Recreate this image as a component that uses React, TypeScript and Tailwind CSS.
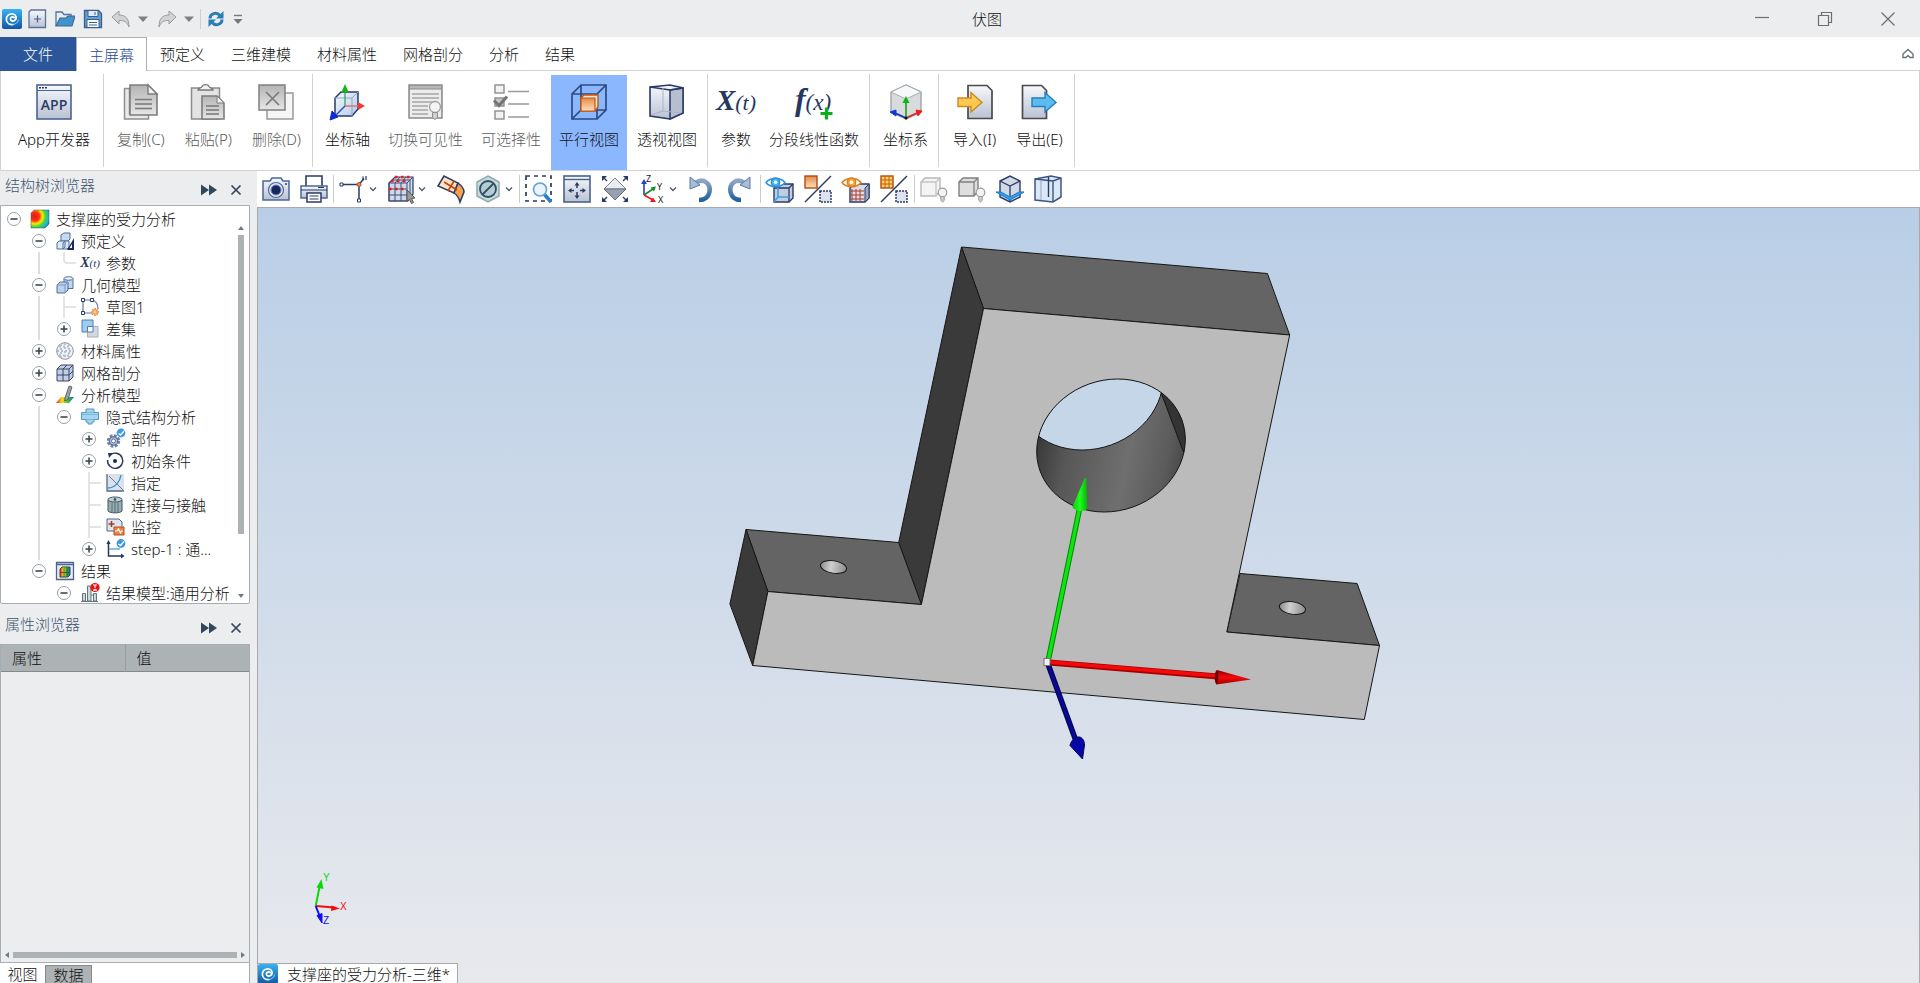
import React from "react";

const NAVY = "#2b3a67";

type SvgProps = { children: React.ReactNode; box?: number; className?: string };

function Icon({ children, box = 28, className = "size-7" }: SvgProps) {
  return (
    <svg viewBox={`0 0 ${box} ${box}`} className={`shrink-0 ${className}`} fill="none" aria-hidden="true">
      {children}
    </svg>
  );
}

function Gradients() {
  return (
    <svg className="absolute size-0" aria-hidden="true">
      <defs>
        <linearGradient id="steel" x1="0" y1="0" x2="0" y2="1">
          <stop offset="0" stopColor="#f6f8fc" />
          <stop offset="1" stopColor="#b9c1d3" />
        </linearGradient>
        <linearGradient id="blueface" x1="0" y1="0" x2="1" y2="1">
          <stop offset="0" stopColor="#f3f8fd" />
          <stop offset="1" stopColor="#b3cbea" />
        </linearGradient>
        <linearGradient id="grey" x1="0" y1="0" x2="0" y2="1">
          <stop offset="0" stopColor="#b4b4b4" />
          <stop offset="1" stopColor="#e6e6e6" />
        </linearGradient>
        <linearGradient id="orange" x1="0" y1="0" x2="0" y2="1">
          <stop offset="0" stopColor="#e58a4a" />
          <stop offset="1" stopColor="#ffe0bd" />
        </linearGradient>
        <linearGradient id="logo" x1="0" y1="0" x2="0" y2="1">
          <stop offset="0" stopColor="#38b2f3" />
          <stop offset="1" stopColor="#1157a6" />
        </linearGradient>
        <linearGradient id="swirl" x1="0" y1="0" x2="0" y2="1">
          <stop offset="0" stopColor="#8fa6c6" />
          <stop offset="1" stopColor="#22619f" />
        </linearGradient>
        <radialGradient id="heat" cx="0.22" cy="0.35" r="1">
          <stop offset="0" stopColor="#f01414" />
          <stop offset="0.25" stopColor="#f5371b" />
          <stop offset="0.42" stopColor="#ffe600" />
          <stop offset="0.6" stopColor="#3fd33f" />
          <stop offset="0.76" stopColor="#16b7e8" />
          <stop offset="0.95" stopColor="#1b3fd8" />
        </radialGradient>
        <linearGradient id="rainbow" x1="0" y1="0" x2="1" y2="0">
          <stop offset="0" stopColor="#ef2020" />
          <stop offset="0.35" stopColor="#f7e016" />
          <stop offset="0.7" stopColor="#27c23a" />
          <stop offset="1" stopColor="#2457e6" />
        </linearGradient>
      </defs>
    </svg>
  );
}

function Logo() {
  return (
    <Icon box={20} className="size-5">
      <rect width="20" height="20" rx="2" fill="url(#logo)" />
      <path
        d="M12.300 8.700C11 7.300 8.300 8 8.400 10c.1 1.900 2.400 2.600 4.200 1.500 2.600-1.600 1.900-5.700-1.500-6.500C7.200 4.200 3.900 7 4.400 10.900c.4 3 3.200 4.900 6.600 4.600"
        stroke="#fff"
        strokeWidth="1.700"
        strokeLinecap="round"
      />
      <path d="M11 15.500c3-.2 5-2 5.500-4.500" stroke="#9fd0f5" strokeWidth="1" strokeLinecap="round" />
    </Icon>
  );
}

/* ---------- ribbon icons (36 x 36) ---------- */

const ribbonIcons: Record<string, React.ReactNode> = {
  app: (
    <>
      <rect x="1" y="1" width="34" height="34" fill="url(#steel)" stroke="#4b6591" strokeWidth="1.600" />
      <path d="M1 6.500h34" stroke="#4b6591" />
      <path d="M3 3.700h8" stroke={NAVY} strokeWidth="1.600" strokeDasharray="2 1" />
      <text x="18" y="26" textAnchor="middle" fontSize="14" fontWeight="600" fontFamily="Open Sans" fill={NAVY}>
        APP
      </text>
    </>
  ),
  copy: (
    <>
      <path d="M1.500 4.500h5v25h19v5.500h-24z" fill="#e9e9e9" stroke="#8f8f8f" strokeWidth="1.500" />
      <path d="M7 1h18l9 9v21H7z" fill="url(#grey)" stroke="#7c7c7c" strokeWidth="1.600" />
      <path d="M25 1v9h9z" fill="#f0f0f0" stroke="#7c7c7c" strokeWidth="1.400" />
      <path d="M12 15.500h17M12 20h17M12 24.500h17" stroke="#777" strokeWidth="1.600" />
    </>
  ),
  paste: (
    <>
      <path d="M1.500 4h28v31h-28z" fill="#e3e3e3" stroke="#8c8c8c" strokeWidth="1.500" />
      <path d="M8 6c0-2 3-1.500 4-3.500C13 0 18 0 19 2.500 20 4.500 23 4 23 6z" fill="#f2f2f2" stroke="#777" strokeWidth="1.400" />
      <path d="M12 12h15l7 7v16H12z" fill="url(#grey)" stroke="#7c7c7c" strokeWidth="1.600" />
      <path d="M27 12v7h7z" fill="#f0f0f0" stroke="#7c7c7c" />
      <path d="M16 22h13M16 26h13M16 30h13" stroke="#777" strokeWidth="1.500" />
    </>
  ),
  remove: (
    <>
      <rect x="9" y="9" width="26" height="26" fill="#f6f6f6" stroke="#9a9a9a" strokeWidth="1.500" />
      <rect x="1" y="1" width="26" height="25" fill="url(#grey)" stroke="#858585" strokeWidth="1.600" />
      <path d="M8 8l13 13M21 8L8 21" stroke="#7a7a7a" strokeWidth="1.700" />
    </>
  ),
  axis: (
    <>
      <path d="M6 14l6-6h17v17l-6 7H6z" fill="url(#blueface)" stroke={NAVY} strokeWidth="1.500" />
      <path d="M6 14h17v18M23 14l6-6" stroke="#8fa6ca" strokeWidth="1" />
      <path d="M16 22V7" stroke="#2fa856" strokeWidth="1.300" />
      <path d="M12.500 8L16 0l3.500 8z" fill="#12b516" />
      <path d="M16 22h13" stroke="#e06f78" strokeWidth="1.500" />
      <path d="M29 18l7 4-7 4z" fill="#f03a3a" />
      <path d="M16 22L5 33" stroke="#2b50c8" strokeWidth="1.500" />
      <path d="M1 36l2-9 6 6z" fill="#0b2bd6" stroke="#0b2bd6" />
    </>
  ),
  visibility: (
    <>
      <rect x="1" y="1" width="33" height="33" fill="url(#grey)" stroke="#8b8b8b" strokeWidth="1.500" />
      <rect x="2" y="5" width="31" height="28" fill="#ececec" />
      <path d="M1 5h33" stroke="#8b8b8b" />
      <path d="M4 10h27M4 14h27M4 18h24M4 22h16M4 26h16M4 30h16" stroke="#a5a5a5" strokeWidth="1.500" />
      <circle cx="27" cy="23" r="5.500" fill="#f4f4f4" stroke="#a2a2a2" strokeWidth="1.300" />
      <path d="M24.500 28.500h5v5l-2.500 2-2.500-2z" fill="#cfcfcf" stroke="#8e8e8e" />
    </>
  ),
  selectable: (
    <>
      <rect x="2" y="1" width="9" height="8" fill="#f2f2f2" stroke="#8d8d8d" strokeWidth="1.400" />
      <rect x="2" y="14" width="9" height="8" fill="#c7c7c7" stroke="#8d8d8d" strokeWidth="1.400" />
      <rect x="2" y="27" width="9" height="8" fill="#f2f2f2" stroke="#8d8d8d" strokeWidth="1.400" />
      <path d="M1 16.500l5 5 8-9" stroke="#757575" strokeWidth="3" />
      <path d="M15 7.500h21M15 20h21M15 33h21" stroke="#9b9b9b" strokeWidth="1.700" />
    </>
  ),
  parallel: (
    <>
      <path d="M1 10h25v25H1zM10 1h25v25H10zM1 10l9-9M26 10l9-9M1 35l9-9M26 35l9-9" stroke="#2c4a80" strokeWidth="1.700" />
      <path d="M10 14l3-3h14v12l-3 4H10z" fill="#ffe8d2" stroke="#c75312" strokeWidth="1.400" />
      <path d="M10 14h14v13H10z" fill="url(#orange)" stroke="#c75312" strokeWidth="1.200" />
    </>
  ),
  perspective: (
    <>
      <path d="M1 3l20-2 13 3v25l-13 6-20-3z" fill="url(#steel)" stroke={NAVY} strokeWidth="1.600" />
      <path d="M21 6v29l13-6V4z" fill="#b6bfd0" stroke={NAVY} strokeWidth="1.500" />
      <path d="M1 3l20 3 13-2" stroke={NAVY} strokeWidth="1.500" />
      <path d="M14 4v23L2 31M14 27l18 2" stroke="#a9b5cb" strokeWidth="1" />
    </>
  ),
  params: (
    <text x="18" y="26" textAnchor="middle" fontFamily="Liberation Serif" fontStyle="italic" fontWeight="700" fill="#26365f">
      <tspan fontSize="29">X</tspan>
      <tspan fontSize="22" fontWeight="400">(t)</tspan>
    </text>
  ),
  fx: (
    <>
      <text x="17" y="26" textAnchor="middle" fontFamily="Liberation Serif" fontStyle="italic" fontWeight="700" fill="#26365f">
        <tspan fontSize="32">f</tspan>
        <tspan fontSize="23" fontWeight="400">(x)</tspan>
      </text>
      <path d="M30.500 23.500v12M24.500 29.500h12" stroke="#0eb01a" strokeWidth="3.200" />
    </>
  ),
  csys: (
    <>
      <path d="M3 8l15-7 15 7v20l-15 7-15-7z" fill="#d8dadb" stroke="#9aa0a5" strokeWidth="1.300" />
      <path d="M3 8l15-7 15 7-15 7z" fill="#f7f8f9" stroke="#a9afb5" />
      <path d="M18 34V17" stroke="#11a514" strokeWidth="1.600" />
      <path d="M14.500 19L18 12l3.500 7z" fill="#10b513" />
      <path d="M18 34L7 29" stroke="#1634c4" strokeWidth="1.500" />
      <path d="M2 28l6-2v6z" fill="#1634d8" stroke="#1634d8" />
      <path d="M18 34l11-5" stroke="#e02020" strokeWidth="1.500" />
      <path d="M34 27l-6-1 2 6z" fill="#ea1f1f" stroke="#ea1f1f" />
      <circle cx="18" cy="34" r="1.500" fill="#111" />
    </>
  ),
  import: (
    <>
      <path d="M11 1.500h19l5 5v28H11z" fill="url(#steel)" stroke="#4a4a4a" strokeWidth="1.700" />
      <path d="M1 14h13V8.500L25 18.500 14 28v-5.500H1z" fill="#ffc84f" stroke="#c98a25" strokeWidth="1.400" />
    </>
  ),
  export: (
    <>
      <path d="M1.500 1.500h19l5 5v28h-24z" fill="url(#steel)" stroke="#4a4a4a" strokeWidth="1.700" />
      <path d="M11 14h13V8.500L35 18.500 24 28v-5.500H11z" fill="#5abcf0" stroke="#257fb8" strokeWidth="1.400" />
    </>
  ),
};

type RibbonItem = { icon: string; label: string; disabled?: boolean; active?: boolean };

const ribbonGroups: { pad: string; itemPad: string; items: RibbonItem[] }[] = [
  { pad: "pl-[9px] pr-[5px]", itemPad: "px-2", items: [{ icon: "app", label: "App开发器" }] },
  {
    pad: "pl-1 pr-[2px]",
    itemPad: "px-[9px]",
    items: [
      { icon: "copy", label: "复制(C)", disabled: true },
      { icon: "paste", label: "粘贴(P)", disabled: true },
      { icon: "remove", label: "删除(D)", disabled: true },
    ],
  },
  {
    pad: "pl-1 pr-[2px]",
    itemPad: "px-2",
    items: [
      { icon: "axis", label: "坐标轴" },
      { icon: "visibility", label: "切换可见性", disabled: true },
      { icon: "selectable", label: "可选择性", disabled: true },
      { icon: "parallel", label: "平行视图", active: true },
      { icon: "perspective", label: "透视视图" },
    ],
  },
  {
    pad: "pl-[5px] pr-[2px]",
    itemPad: "px-2",
    items: [
      { icon: "params", label: "参数" },
      { icon: "fx", label: "分段线性函数" },
    ],
  },
  { pad: "pl-[5px] pr-[2px]", itemPad: "px-2", items: [{ icon: "csys", label: "坐标系" }] },
  {
    pad: "pl-[5px] pr-[2px]",
    itemPad: "px-[9px]",
    items: [
      { icon: "import", label: "导入(I)" },
      { icon: "export", label: "导出(E)" },
    ],
  },
];

function Ribbon() {
  return (
    <div className="flex h-[100px] shrink-0 items-stretch border border-t-0 border-[#d2d2d2]">
      {ribbonGroups.map((group, gi) => (
        <div key={gi} className="flex">
          <div className={`flex gap-[2px] ${group.pad}`}>
            {group.items.map((item) => (
              <button
                key={item.icon}
                aria-pressed={item.active}
                className={`mt-1 flex flex-col items-center pt-[9px] ${group.itemPad} ${
                  item.active ? "bg-[#8bb7ff]" : ""
                } ${item.disabled ? "text-[#5c5c5c]" : ""}`}
              >
                <Icon box={36} className="-mx-1 size-9 overflow-visible">
                  {ribbonIcons[item.icon]}
                </Icon>
                <span className="mt-[9px] whitespace-nowrap leading-5">{item.label}</span>
              </button>
            ))}
          </div>
          <div className="my-[3px] w-px bg-[#d2d2d2]" />
        </div>
      ))}
    </div>
  );
}

/* ---------- view toolbar icons (28 x 28) ---------- */

const Bulb = () => (
  <>
    <circle cx="22.500" cy="17.500" r="4.300" fill="#f3f3f3" stroke="#9d9d9d" strokeWidth="1.200" />
    <path d="M20.800 21.500h3.400v4l-1.700 1.500-1.700-1.500z" fill="#cfcfcf" stroke="#9d9d9d" />
  </>
);

const Eye = ({ color, light }: { color: string; light: string }) => (
  <>
    <path d="M0 7.500C4 2 15 2 19 7.500 15 13 4 13 0 7.500z" fill="#fff" stroke={color} strokeWidth="1.500" />
    <circle cx="9.500" cy="7.200" r="4.200" fill={light} stroke={color} strokeWidth="1.400" />
    <circle cx="9.500" cy="7.200" r="1.800" fill="#fff" />
  </>
);

const toolIcons: Record<string, React.ReactNode> = {
  camera: (
    <>
      <path d="M1 6h7l2-3h9l2 3h6v19H1z" fill="url(#steel)" stroke="#4a6797" strokeWidth="1.500" />
      <circle cx="14" cy="15" r="7.500" fill="#dfe6f1" stroke="#4a6797" strokeWidth="1.200" />
      <circle cx="14" cy="15" r="5" fill="#16295c" stroke="#6f87b2" />
      <circle cx="24" cy="9" r="1" fill={NAVY} />
    </>
  ),
  printer: (
    <>
      <path d="M6 12V1h16v11" fill="#fff" stroke={NAVY} strokeWidth="1.600" />
      <path d="M1 11h26v12H1z" fill="url(#steel)" stroke="#4a6797" strokeWidth="1.500" />
      <path d="M1 15h26M18 12.500h6" stroke={NAVY} strokeWidth="1.200" />
      <path d="M7 18h14v9H7z" fill="#fff" stroke={NAVY} strokeWidth="1.500" />
      <path d="M9.500 21h9M9.500 24h9" stroke={NAVY} strokeWidth="1.200" />
    </>
  ),
  vertex: (
    <>
      <path d="M2 9.500h18M20 9.500V26M20 9.500l5-6" stroke={NAVY} strokeWidth="1.500" />
      <path d="M24 1.500v4M27 1v4" stroke={NAVY} strokeWidth="1.200" />
      <path d="M1 8h3v3H1zM18.500 24h3v3h-3z" fill="#fff" stroke={NAVY} />
      <circle cx="20" cy="9.500" r="2" fill="#f08a50" stroke="#b5470f" />
    </>
  ),
  mesh: (
    <>
      <path d="M1 8l6-6h18v17l-5 7H1z" fill="#cfd9e8" stroke={NAVY} strokeWidth="1.200" />
      <path d="M1 8h18v18H1zM7 8v18M13 8v18M1 14h18M1 20h18M7 8l5-6M13 8l5-6M19 8l6-6M4 5h18v16" stroke="#40517c" />
      <path d="M1 14h18M3 6h18M7 2h18" stroke="#f01818" strokeWidth="2.500" strokeDasharray="2.500 3.500" />
      <path d="M19 15l8 8-3.500.5 2 4-2 1-2-4-2.500 2z" fill="#9a9a9a" stroke="#555" />
    </>
  ),
  plane: (
    <>
      <path d="M1 11L7 1l14 7-4 10z" fill="#ffe2c2" stroke={NAVY} strokeWidth="1.500" />
      <path d="M21 8c4 3 6 6 6 9l-4 10c-1-4-3-7-6-9z" fill="#f5a14f" stroke={NAVY} strokeWidth="1.500" />
      <path d="M7 7l13 8M17 6l-6 10" stroke="#c2400c" strokeWidth="1.500" />
    </>
  ),
  hex: (
    <>
      <path d="M13 1l11 6v14l-11 6-11-6V7z" fill="#c8dcde" stroke="#8fa9ad" strokeWidth="1.500" />
      <circle cx="13" cy="14" r="8" fill="#b6ccd0" stroke="#2f4f68" strokeWidth="1.800" />
      <path d="M7.500 19.500l11-11" stroke="#2f4f68" strokeWidth="1.800" />
    </>
  ),
  zoom: (
    <>
      <rect x="1" y="1" width="25" height="25" stroke={NAVY} strokeWidth="1.700" strokeDasharray="4 4" />
      <path d="M19 19l7 8" stroke="#2580c4" strokeWidth="3.500" />
      <circle cx="15" cy="14.500" r="6.500" fill="#e8f3fb" stroke="#63a3cf" strokeWidth="1.600" />
    </>
  ),
  fit: (
    <>
      <rect x="1" y="1" width="26" height="26" fill="url(#steel)" stroke="#49628e" strokeWidth="1.600" />
      <path d="M1 4.500h26" stroke="#49628e" strokeWidth="1.400" />
      <path d="M14 10v3M14 17v4M8 15.500h3M17 15.500h3" stroke={NAVY} strokeWidth="1.500" />
      <path d="M11.500 10.500L14 7l2.500 3.500zM11.500 20.500L14 24l2.500-3.500zM8.500 13L5 15.500 8.500 18zM19.500 13l3.500 2.500-3.500 2.500z" fill={NAVY} />
    </>
  ),
  diamond: (
    <>
      <path d="M3 14L14 3l11 11z" fill="#e9ecef" stroke="#7d8691" />
      <path d="M3 14l11 11 11-11z" fill="#98a2af" stroke="#667080" />
      <path d="M2 2l4 4M26 2l-4 4M2 26l4-4M26 26l-4-4" stroke={NAVY} strokeWidth="1.400" />
      <path d="M1 6V1h5zM27 6V1h-5zM1 22v5h5zM27 22v5h-5z" fill={NAVY} />
    </>
  ),
  axes: (
    <>
      <path d="M5 20V8" stroke="#2444c8" strokeWidth="1.600" />
      <path d="M2 9l3-5 3 5z" fill="#2444c8" />
      <path d="M5 20l9-6" stroke="#138a2c" strokeWidth="1.600" />
      <path d="M17 11.500l-2 5-3.500-4z" fill="#138a2c" />
      <path d="M5 20l9 5" stroke="#e81a1a" strokeWidth="1.600" />
      <path d="M17 27h-6l3-4.500z" fill="#e81a1a" />
      <g fontSize="9" fontFamily="Noto Sans" fontWeight="400" fill="#222">
        <text x="7" y="7">Z</text>
        <text x="18" y="15">Y</text>
        <text x="19" y="28">X</text>
      </g>
    </>
  ),
  undo: (
    <>
      <path d="M7 8C16 2 23 9 21.500 17c-1 5-5 8-10.500 8" stroke="url(#swirl)" strokeWidth="4.500" />
      <path d="M2 2v12l10-4z" fill="#a9bbd6" stroke="#5a7aa8" />
    </>
  ),
  redo: (
    <>
      <path d="M19 8C10 2 3 9 4.500 17c1 5 5 8 10.500 8" stroke="url(#swirl)" strokeWidth="4.500" />
      <path d="M24 2v12l-10-4z" fill="#a9bbd6" stroke="#5a7aa8" />
    </>
  ),
  eyecube: (
    <>
      <path d="M8 13l4-4h15v14l-4 4H8z" fill="#c2cedf" stroke={NAVY} strokeWidth="1.400" />
      <path d="M8 13h15v14M23 13l4-4" stroke={NAVY} strokeWidth="1.300" />
      <path d="M12 13v9h11M12 22l-4 5" stroke="#3ba0e6" strokeWidth="1.600" />
      <Eye color="#2b93d8" light="#49b4f2" />
    </>
  ),
  swapface: (
    <>
      <rect x="1" y="1" width="12" height="12" fill="url(#orange)" stroke="#b04c14" strokeWidth="1.400" />
      <path d="M27 1L1 27" stroke={NAVY} strokeWidth="1.500" />
      <rect x="16" y="16" width="11" height="11" fill="#dde2ec" stroke={NAVY} strokeWidth="1.500" strokeDasharray="2 1" />
    </>
  ),
  eyemesh: (
    <>
      <path d="M8 13l4-4h15v14l-4 4H8z" fill="#d9dde6" stroke={NAVY} strokeWidth="1.400" />
      <path d="M23 13v14l4-4V9z" fill="#9fa9bd" stroke={NAVY} />
      <path d="M10 14v12M14 14v12M18 14v12M9 16h13M9 20h13M9 24h13" stroke="#b23a2a" />
      <Eye color="#d9801f" light="#f5a83e" />
    </>
  ),
  swapmesh: (
    <>
      <rect x="1" y="1" width="12" height="12" fill="#ffd25c" stroke="#b04c14" strokeWidth="1.400" />
      <path d="M5 1v12M9 1v12M1 5h12M1 9h12" stroke="#c25a1a" />
      <path d="M27 1L1 27" stroke={NAVY} strokeWidth="1.500" />
      <rect x="16" y="16" width="11" height="11" fill="#dde2ec" stroke={NAVY} strokeWidth="1.500" strokeDasharray="2 1" />
    </>
  ),
  bulblight: (
    <>
      <path d="M1 7l4-4h15v13l-4 5H1z" fill="#f4f4f4" stroke="#b9b9b9" strokeWidth="1.400" />
      <path d="M1 7h15v14M16 7l4-4" stroke="#c4c4c4" strokeWidth="1.300" />
      <Bulb />
    </>
  ),
  bulbdark: (
    <>
      <path d="M1 7l4-4h15v13l-4 5H1z" fill="#dedede" stroke="#808080" strokeWidth="1.400" />
      <path d="M1 7h15v14M16 7l4-4" stroke="#808080" strokeWidth="1.300" />
      <Bulb />
    </>
  ),
  section: (
    <>
      <path d="M4 6l10-5 10 5v16l-10 5-10-5z" fill="#d3d9e4" stroke={NAVY} strokeWidth="1.400" />
      <path d="M4 6l10 5 10-5M14 11v16" stroke={NAVY} strokeWidth="1.300" />
      <path d="M0 17h5l9 5 9-5h5l-14 8z" fill="#2fa4f5" stroke="#1977c9" />
    </>
  ),
  glassbox: (
    <>
      <path d="M1 4l16-3 10 2v19l-8 5-18-2z" fill="#dbe7f4" stroke="#3c5583" strokeWidth="1.500" />
      <path d="M1 4l18 2v21M19 6l8-3" stroke="#3c5583" strokeWidth="1.400" />
      <path d="M7 5v20" stroke="#93a8c8" />
      <path d="M14.500 2v20" stroke={NAVY} strokeWidth="1.400" />
    </>
  ),
};

const toolGroups: { icon: string; label: string; split?: boolean }[][] = [
  [
    { icon: "camera", label: "截图" },
    { icon: "printer", label: "打印" },
  ],
  [
    { icon: "vertex", label: "选择点", split: true },
    { icon: "mesh", label: "选择网格", split: true },
    { icon: "plane", label: "平面" },
    { icon: "hex", label: "过滤", split: true },
  ],
  [
    { icon: "zoom", label: "框选缩放" },
    { icon: "fit", label: "适应窗口" },
    { icon: "diamond", label: "居中" },
    { icon: "axes", label: "视角", split: true },
    { icon: "undo", label: "撤销视图" },
    { icon: "redo", label: "恢复视图" },
  ],
  [
    { icon: "eyecube", label: "显示几何" },
    { icon: "swapface", label: "切换几何" },
    { icon: "eyemesh", label: "显示网格" },
    { icon: "swapmesh", label: "切换网格" },
  ],
  [
    { icon: "bulblight", label: "隐藏" },
    { icon: "bulbdark", label: "显示" },
    { icon: "section", label: "剖切" },
    { icon: "glassbox", label: "透明" },
  ],
];

function ViewToolbar() {
  return (
    <div className="flex h-[36px] shrink-0 items-stretch bg-white py-1">
      {toolGroups.map((group, gi) => (
        <div
          key={gi}
          className={`flex items-center ${gi < toolGroups.length - 1 ? "border-r border-[#cccccc]" : ""} ${
            gi > 1 ? "pr-px" : ""
          }`}
        >
          {group.map((t) => (
            <button
              key={t.icon}
              aria-label={t.label}
              className={`flex items-center pl-[5px] ${t.split ? "w-[49px] gap-[2px]" : "w-[38px]"}`}
            >
              <Icon className="size-7 overflow-visible">{toolIcons[t.icon]}</Icon>
              {t.split && (
                <Icon box={8} className="size-2">
                  <path d="M1 2.500l3 3 3-3" stroke="#4d6070" strokeWidth="1.400" />
                </Icon>
              )}
            </button>
          ))}
        </div>
      ))}
    </div>
  );
}

/* ---------- title bar and tabs ---------- */

function TitleBar() {
  const caret = (
    <Icon box={10} className="size-[10px]">
      <path d="M0 2.500h10L5 8z" fill="#808080" />
    </Icon>
  );
  return (
    <header className="grid h-[37px] shrink-0 grid-cols-[1fr_auto_1fr] items-center bg-[#ecedef]">
      <div className="flex items-center pl-[2px]">
        <Logo />
        <button aria-label="新建" className="ml-[6px]">
          <Icon box={20} className="size-5">
            <path d="M1 3l2-2h14.500v17.500H1z" fill="url(#steel)" stroke="#5c7299" strokeWidth="1.300" />
            <path d="M9.500 6.500v7M6 10h7" stroke="#4a5d84" strokeWidth="1.200" />
          </Icon>
        </button>
        <button aria-label="打开" className="ml-[7px]">
          <Icon box={20} className="size-5">
            <path d="M1 17V3h6l2 2.500h7V9" fill="#e6ecf5" stroke="#54719f" strokeWidth="1.300" />
            <path d="M1 17L5 9h6l2-2h7l-3 10z" fill="#3f94cc" stroke="#45648f" strokeWidth="1.100" />
          </Icon>
        </button>
        <button aria-label="保存" className="ml-[8px]">
          <Icon box={20} className="size-5">
            <path d="M1.500 1.500h14l3 3v14h-17z" fill="#5da2d4" stroke="#3c5e8d" strokeWidth="1.300" />
            <path d="M5 1.500h10v6H5z" fill="#e4ebf4" stroke="#3c5e8d" />
            <path d="M4 10.500h12v8H4z" fill="#fff" stroke="#3c5e8d" />
            <path d="M6 13.500h8M6 16h8M12 3v3" stroke="#3c5e8d" />
          </Icon>
        </button>
        <button aria-label="撤销" className="ml-[8px] flex items-center gap-[7px]">
          <Icon box={20} className="size-5">
            <path d="M1 8l7-6v4c7 0 10 4 10 12-2-5-4-6.500-10-6.500V15z" fill="#d3d3d3" stroke="#9b9b9b" />
          </Icon>
          {caret}
        </button>
        <button aria-label="重做" className="ml-[9px] flex items-center gap-[7px]">
          <Icon box={20} className="size-5">
            <path d="M19 8l-7-6v4C5 6 2 10 2 18c2-5 4-6.500 10-6.500V15z" fill="#d3d3d3" stroke="#9b9b9b" />
          </Icon>
          {caret}
        </button>
        <div className="ml-[6px] h-5 w-px bg-[#cfcfcf]" />
        <button aria-label="刷新" className="ml-[5px]">
          <Icon box={20} className="size-5">
            <path d="M4 9.500C4 4.500 10.500 2.500 14 6.500" stroke="#2a7db5" strokeWidth="3" />
            <path d="M17.500 2v7.500H10z" fill="#2a7db5" />
            <path d="M16 10.500c0 5-6.500 7-10 3" stroke="#2a7db5" strokeWidth="3" />
            <path d="M2.500 18v-7.500H10z" fill="#2a7db5" />
          </Icon>
        </button>
        <button aria-label="自定义快速访问工具栏" className="ml-[7px]">
          <Icon box={10} className="size-[10px]">
            <path d="M1 1.500h8" stroke="#777" strokeWidth="1.400" />
            <path d="M.500 5h9L5 10z" fill="#777" />
          </Icon>
        </button>
      </div>
      <h1 className="pl-[54px] leading-5">伏图</h1>
      <div className="flex items-center justify-end gap-[47px] pr-6">
        <button aria-label="最小化">
          <Icon box={16} className="size-4">
            <path d="M1 6.500h14" stroke="#6e6e6e" strokeWidth="1.200" />
          </Icon>
        </button>
        <button aria-label="还原">
          <Icon box={16} className="size-4">
            <path d="M1.500 4.500h10v10h-10zM4.500 4.500v-3h10v10h-3" stroke="#6e6e6e" strokeWidth="1.200" />
          </Icon>
        </button>
        <button aria-label="关闭">
          <Icon box={16} className="size-4">
            <path d="M1.500 1.500l13 13M14.500 1.500l-13 13" stroke="#6e6e6e" strokeWidth="1.200" />
          </Icon>
        </button>
      </div>
    </header>
  );
}

const menuTabs = ["预定义", "三维建模", "材料属性", "网格剖分", "分析", "结果"];

function MenuTabs() {
  return (
    <nav className="flex h-[34px] shrink-0 items-stretch bg-white leading-8">
      <button className="w-[76px] bg-[#2b579a] text-white">文件</button>
      <button className="border border-b-0 border-[#b0b0b0] px-[12px] text-[#1f4a8f]">主屏幕</button>
      <div className="flex grow border-b border-[#d2d2d2]">
        {menuTabs.map((t) => (
          <button key={t} className="px-[13px]">
            {t}
          </button>
        ))}
        <button aria-label="折叠功能区" className="ml-auto pr-[6px]">
          <Icon box={12} className="size-3">
            <path d="M1 6l5-4.500L11 6v3.500H8L6 7.500l-2 2H1z" stroke="#68737d" strokeWidth="1.400" />
          </Icon>
        </button>
      </div>
    </nav>
  );
}

/* ---------- structure tree ---------- */

const treeIcons: Record<string, React.ReactNode> = {
  root: <path d="M0 3l3-3h15v14l-4 4H0z" fill="url(#heat)" stroke="#3a5a3a" strokeWidth=".5" />,
  shapes: (
    <>
      <path d="M5 3l3-2h6v6l-2 2H5z" fill="#c7d9f0" stroke="#4f6c9e" />
      <path d="M1 11l2-2h6v6l-2 2H1zM7 11l2-2h4v6l-2 2H7z" fill="#dde8f6" stroke="#4f6c9e" />
      <path d="M18 6v12h-7z" fill="#1e2c55" />
      <path d="M16 12v4h-2.500z" fill="#fff" />
    </>
  ),
  params: (
    <text x="9" y="13" textAnchor="middle" fontFamily="Liberation Serif" fontStyle="italic" fontWeight="700" fill="#26365f">
      <tspan fontSize="14">X</tspan>
      <tspan fontSize="11" fontWeight="400">(t)</tspan>
    </text>
  ),
  geometry: (
    <>
      <path d="M8 2.500v10h9v-10" fill="#c4d6ed" stroke="#4f6c9e" />
      <ellipse cx="12.500" cy="2.500" rx="4.500" ry="1.800" fill="#edf3fb" stroke="#4f6c9e" />
      <path d="M1 9l3-3h8v8l-3 3H1z" fill="#bcd1ec" stroke="#4f6c9e" />
      <path d="M1 9h8v8M9 9l3-3" stroke="#7d97c0" />
    </>
  ),
  sketch: (
    <>
      <path d="M2 2v13M2 2h9M11 2c4 1 6 5 6 9M2 15h9" stroke="#5c77a8" strokeWidth="1.200" />
      <path d="M.500 .5h3v3h-3zM9.500.5h3v3h-3zM.500 13.500h3v3h-3z" fill="#fff" stroke={NAVY} />
      <path d="M14 10v8M10 14h8M11.200 11.200l5.600 5.600M16.800 11.200l-5.600 5.600" stroke="#f0803a" strokeWidth="1.500" />
      <circle cx="14" cy="14" r="1.800" fill="#ffd38a" />
    </>
  ),
  boolean: (
    <>
      <path d="M1 0h11v12H1z" fill="#9fcdf0" stroke="#4d7fb2" />
      <path d="M6.500 6.500h10.500v10.500H6.500z" fill="#d2d7e2" stroke="#a3adc0" />
      <path d="M6.500 6.500h5.500v5.500H6.500z" fill="#fff" stroke="#4d7fb2" />
    </>
  ),
  material: (
    <>
      <circle cx="9" cy="9" r="8.300" fill="#eef1f5" stroke="#8794a8" />
      <path d="M3 4.500h12M1 9h16M3 13.500h12M5 2v14M9 1v16M13 2v14" stroke="#b4bdcb" strokeWidth="1.800" strokeDasharray="2 2" />
    </>
  ),
  mesh: (
    <>
      <path d="M1 5l4-4h12v12l-4 4H1z" fill="#c3cedf" stroke="#34466e" />
      <path d="M1 5h12v12M13 5l4-4M1 11h12l4-4M7 17V5l4-4" stroke="#34466e" />
    </>
  ),
  analysis: (
    <>
      <path d="M5 11h13l-5 6H0z" fill="url(#rainbow)" />
      <path d="M13 0l3 1-4 12.500-3.500 1.500.8-4z" fill="#9ba1a9" stroke="#4c525a" strokeWidth=".8" />
    </>
  ),
  implicit: (
    <>
      <path d="M5 1h8v3.500h4.500v7H13v2.500h-2v2H7v-2H5v-2.500H.500v-7H5z" fill="#a6d6ee" stroke="#5199c2" />
      <path d="M5 4.500h8M1 6.500h16M5 11.500h8" stroke="#74b7da" />
    </>
  ),
  part: (
    <>
      <circle cx="7.500" cy="11" r="5" stroke="#7183a6" strokeWidth="3.500" strokeDasharray="2.500 1.400" />
      <circle cx="7.500" cy="11" r="4.200" fill="#b9c7df" stroke="#5c7099" strokeWidth="1.300" />
      <circle cx="7.500" cy="11" r="2" fill="#fff" stroke="#5c7099" />
      <circle cx="15" cy="3" r="4.400" fill="#3b99e0" />
      <path d="M12.500 3.500l2 1.500 3.500-4" stroke="#fff" strokeWidth="1.400" />
    </>
  ),
  initial: (
    <>
      <path d="M4 3.200A7.600 7.600 0 1 1 1.600 8" stroke="#26365f" strokeWidth="1.400" />
      <path d="M2 1h5L3 6z" fill="#26365f" />
      <circle cx="9" cy="9" r="2" fill="#1c2a52" />
    </>
  ),
  assign: (
    <>
      <path d="M1 0h17v17H1z" fill="#dce1ea" />
      <path d="M1 0v17h17" stroke="#54688f" strokeWidth="1.300" />
      <path d="M3 2l14 14" stroke="#6a7a99" />
      <path d="M2 14C9 14 14 8 15 1" stroke="#2d94cf" strokeWidth="1.400" />
    </>
  ),
  contact: (
    <>
      <path d="M2 4v11c1.500 2.500 12.500 2.500 14 0V4z" fill="#97adb2" stroke="#3f5660" />
      <ellipse cx="9" cy="3.500" rx="7" ry="2.500" fill="#c2d2d5" stroke="#3f5660" />
      <circle cx="9" cy="3.500" r="1.300" fill="#33474f" />
      <path d="M6 6.500v10M9 6.500v10M12 6.500v10" stroke="#55707a" />
    </>
  ),
  monitor: (
    <>
      <path d="M1 1h12l3 3v9H1z" fill="#dfe5ef" stroke="#4d6492" />
      <path d="M5.500 3v6M2.500 6h6" stroke="#a33d1e" strokeWidth="1.600" />
      <path d="M8 9h10v8H8z" fill="#e98343" stroke="#b4521b" />
      <path d="M9 13h2l1.500-2 2 4 1-2H17" stroke="#fff" strokeWidth="1.200" />
    </>
  ),
  step: (
    <>
      <path d="M2.500 2v14H17" stroke="#26365f" strokeWidth="1.500" />
      <path d="M.500 4l2-4 2 4zM15 13.500l3.500 2.500-3.500 2.500z" fill="#26365f" />
      <path d="M3 9h11" stroke="#5aa6d8" strokeWidth="1.400" />
      <circle cx="15" cy="3.500" r="4.400" fill="#3b99e0" />
      <path d="M12.500 4l2 1.500 3.500-4" stroke="#fff" strokeWidth="1.400" />
    </>
  ),
  result: (
    <>
      <path d="M.500.500h17v17H.500z" fill="#e7ecf3" stroke="#4f648e" strokeWidth="1.300" />
      <path d="M.500 2.500h17" stroke="#4f648e" strokeWidth="1.500" />
      <path d="M4 7l2-2h8v8l-2 2H4z" fill="url(#rainbow)" stroke="#2c4a3a" />
      <path d="M4 10.500h9M8 6v9M11 6v8" stroke="#3b3b3b" strokeWidth=".8" />
    </>
  ),
  resultmodel: (
    <>
      <path d="M1.500 9.500h3V17h-3zM6.500 2h3.500v15H6.500zM12.500 9.500h3V17h-3z" fill="#c8d8db" stroke="#61767d" />
      <path d="M0 17.500h17M10 11h3" stroke="#61767d" />
      <circle cx="14" cy="3.500" r="4.600" fill="#f00f0f" />
      <path d="M14 1v2.700M14 4.700v1.500M12 1h4M12 6.200h4" stroke="#fff" strokeWidth="1.200" />
    </>
  ),
};

/* Each character of `g` is one 25px cell: blank, | guide, L end, T branch, + closed, - open. */
const treeRows: { g: string; icon: string; label: string }[] = [
  { g: "-", icon: "root", label: "支撑座的受力分析" },
  { g: " -", icon: "shapes", label: "预定义" },
  { g: " |L", icon: "params", label: "参数" },
  { g: " -", icon: "geometry", label: "几何模型" },
  { g: " |T", icon: "sketch", label: "草图1" },
  { g: " |+", icon: "boolean", label: "差集" },
  { g: " +", icon: "material", label: "材料属性" },
  { g: " +", icon: "mesh", label: "网格剖分" },
  { g: " -", icon: "analysis", label: "分析模型" },
  { g: " |-", icon: "implicit", label: "隐式结构分析" },
  { g: " | +", icon: "part", label: "部件" },
  { g: " | +", icon: "initial", label: "初始条件" },
  { g: " | T", icon: "assign", label: "指定" },
  { g: " | T", icon: "contact", label: "连接与接触" },
  { g: " | T", icon: "monitor", label: "监控" },
  { g: " | +", icon: "step", label: "step-1 : 通..." },
  { g: " -", icon: "result", label: "结果" },
  { g: "  -", icon: "resultmodel", label: "结果模型:通用分析" },
];

function TreeCell({ kind }: { kind: string }) {
  return (
    <svg viewBox="0 0 25 22" className="h-[22px] w-[25px] shrink-0" fill="none" aria-hidden="true">
      {kind === "|" && <path d="M13 0v22" stroke="#dcdcdc" strokeWidth="2" />}
      {kind === "T" && <path d="M13 0v22M13 11h12" stroke="#dcdcdc" strokeWidth="1.500" />}
      {kind === "L" && <path d="M13 0v8q0 3 3 3h9" stroke="#dcdcdc" strokeWidth="1.500" />}
      {(kind === "+" || kind === "-") && (
        <>
          <circle cx="13" cy="11" r="6.500" fill="#fff" stroke="#9aa0a6" />
          <path d="M9.500 11h7" stroke="#3c4a55" strokeWidth="1.600" />
          {kind === "+" && <path d="M13 7.500v7" stroke="#3c4a55" strokeWidth="1.600" />}
        </>
      )}
    </svg>
  );
}

function PanelTitle({ children, className }: { children: string; className: string }) {
  return (
    <div className={`flex shrink-0 justify-between pl-[5px] ${className}`}>
      <h2 className="leading-6 text-[#42566f]">{children}</h2>
      <div className="flex items-center gap-[13px] pr-[15px] pt-[6px]">
        <button aria-label="自动隐藏">
          <Icon box={16} className="size-4">
            <path d="M0 2.500l8 5.500-8 5.500zM8 2.500l8 5.500-8 5.500z" fill="#33475b" />
          </Icon>
        </button>
        <button aria-label="关闭面板">
          <Icon box={12} className="size-3">
            <path d="M1.500 1.500l9 9M10.500 1.500l-9 9" stroke="#33475b" strokeWidth="1.700" />
          </Icon>
        </button>
      </div>
    </div>
  );
}

function StructureTree() {
  return (
    <div className="mr-[7px] flex h-[399px] shrink-0 rounded-b-[2px] border border-[#a9adb1] bg-white pt-[2px]">
      <ul className="min-w-0 grow overflow-hidden">
        {treeRows.map((r) => (
          <li key={r.label} className="flex h-[22px] items-center whitespace-nowrap leading-5">
            {r.g.split("").map((k, i) => (
              <TreeCell key={i} kind={k} />
            ))}
            <Icon box={18} className="ml-[5px] mr-[7px] size-[18px] overflow-visible">
              {treeIcons[r.icon]}
            </Icon>
            {r.label}
          </li>
        ))}
      </ul>
      <div className="flex w-[11px] shrink-0 flex-col pb-1 pt-[17px]">
        <Icon box={6} className="size-[6px]">
          <path d="M0 5l3-4 3 4z" fill="#6c7c83" />
        </Icon>
        <div className="mt-[4px] h-[299px] w-[6px] bg-[#adb2b5]" />
        <Icon box={6} className="mt-auto size-[6px]">
          <path d="M0 1l3 4 3-4z" fill="#6c7c83" />
        </Icon>
      </div>
    </div>
  );
}

function LeftPanel() {
  return (
    <aside className="flex w-[257px] shrink-0 flex-col bg-[#ecedef]">
      <PanelTitle className="h-[34px] pb-1 pt-[2px]">结构树浏览器</PanelTitle>
      <StructureTree />
      <PanelTitle className="h-[40px] pb-[6px] pt-2">属性浏览器</PanelTitle>
      <div className="mr-[7px] flex min-h-0 grow flex-col border border-[#a9adb1]">
        <table className="w-full table-fixed border-collapse">
          <thead>
            <tr className="h-[26px] border-b border-[#85898c] bg-[#adb2b5] text-left leading-5">
              <th className="border-r border-[#989da1] pl-[11px] font-light">属性</th>
              <th className="pl-[11px] font-light">值</th>
            </tr>
          </thead>
        </table>
        <div className="mt-auto flex items-center justify-between px-[3px] pb-1">
          <Icon box={6} className="size-[6px]">
            <path d="M5 0L1 3l4 3z" fill="#6c7c83" />
          </Icon>
          <div className="mx-[3px] h-[6px] grow bg-[#adb2b5]" />
          <Icon box={6} className="size-[6px]">
            <path d="M1 0l4 3-4 3z" fill="#6c7c83" />
          </Icon>
        </div>
      </div>
      <div className="mr-[7px] flex h-[20px] shrink-0 items-stretch border-r border-[#a9adb1] bg-white leading-4">
        <button className="w-[45px] pt-[2px]">视图</button>
        <button className="mt-[2px] w-[47px] border border-b-0 border-[#85898c] bg-[#adb2b5]">数据</button>
      </div>
    </aside>
  );
}

/* ---------- 3D view ---------- */

const HOLE = "matrix(73 6.45 -13.9 66.2 1111 445.5)";
const HOLE_BACK = "matrix(73 6.45 -13.9 66.2 1089 383.5)";

function Model() {
  return (
    <svg
      viewBox="258 208 1661 775"
      preserveAspectRatio="xMidYMid meet"
      className="min-h-0 w-full grow basis-0"
      role="img"
      aria-label="支撑座三维模型"
    >
      <defs>
        <linearGradient id="bore" gradientUnits="userSpaceOnUse" x1="1036" y1="450" x2="1185" y2="480">
          <stop offset="0" stopColor="#3a3a3a" />
          <stop offset="0.2" stopColor="#575757" />
          <stop offset="0.6" stopColor="#6f6f6f" />
          <stop offset="0.85" stopColor="#5c5c5c" />
          <stop offset="1" stopColor="#444444" />
        </linearGradient>
        <linearGradient id="pin" x1="0" y1="0" x2="1" y2="0">
          <stop offset="0" stopColor="#8c8c8c" />
          <stop offset="0.4" stopColor="#cfcfcf" />
          <stop offset="1" stopColor="#8c8c8c" />
        </linearGradient>
        <linearGradient id="redcone" x1="0" y1="0" x2="0" y2="1">
          <stop offset="0" stopColor="#8a0000" />
          <stop offset="0.5" stopColor="#f50808" />
          <stop offset="1" stopColor="#a00000" />
        </linearGradient>
        <linearGradient id="greencone" x1="0" y1="0" x2="1" y2="0">
          <stop offset="0" stopColor="#0fc40f" />
          <stop offset="0.5" stopColor="#1dff1d" />
          <stop offset="1" stopColor="#0bb00b" />
        </linearGradient>
        <clipPath id="holeclip">
          <circle r="1" transform={HOLE} />
        </clipPath>
      </defs>

      <g stroke="#161616" strokeWidth="1" strokeLinejoin="round">
        <path d="M961.500 247L1267.400 273.500 1289.700 335 983.500 308.500z" fill="#646464" />
        <path d="M961.500 247L983.500 308.500 921.400 604.500 898.700 542.500z" fill="#3a3a3a" />
        <path d="M746 529.500L898.700 542.500 921.400 604.500 767.900 591.500z" fill="#646464" />
        <path d="M746 529.500L767.900 591.500 752.700 665.500 729.900 604z" fill="#3a3a3a" />
        <path d="M1240 573.500L1357.100 583.500 1379.500 645.500 1226.800 632z" fill="#646464" />
        <path
          d="M983.500 308.500L1289.700 335 1226.800 632 1379.500 645.500 1364.300 719.500 752.700 665.500 767.900 591.500 921.400 604.500z"
          fill="#bbbbbb"
        />
        <ellipse cx="833.500" cy="567" rx="13.200" ry="6.200" transform="rotate(9 833.500 567)" fill="url(#pin)" />
        <ellipse cx="1292.400" cy="608" rx="13.200" ry="6.200" transform="rotate(9 1292.400 608)" fill="url(#pin)" />
      </g>

      <g clipPath="url(#holeclip)" stroke="#161616">
        <rect x="1030" y="370" width="160" height="150" fill="url(#bore)" stroke="none" />
        <path d="M1161 392.700L1183.500 452H1195V385z" fill="#343434" strokeWidth="1" />
        <circle r="1" transform={HOLE_BACK} fill="#c5d6e8" vectorEffect="non-scaling-stroke" strokeWidth="1" />
      </g>
      <circle r="1" transform={HOLE} stroke="#161616" strokeWidth="1" fill="none" vectorEffect="non-scaling-stroke" />

      <path d="M1048 661.500L1079.500 509" stroke="#06840a" strokeWidth="5.500" />
      <path d="M1048 661.500L1079.500 509" stroke="#0de60d" strokeWidth="3.500" />
      <path d="M1084.800 478h1.600l1 30.500c-2 4-12.500 3-15-1.500z" fill="url(#greencone)" />
      <path d="M1049 662.500L1218 676.500" stroke="#a80000" strokeWidth="6" />
      <path d="M1049 662L1218 676" stroke="#f50a0a" strokeWidth="3.500" />
      <path d="M1251 679.500l-34-9.500c-3 3-3 11-.500 14.500z" fill="url(#redcone)" />
      <path d="M1217 670c2 4 2 10-.500 14.500-2.500-4-2.500-11 .5-14.500z" fill="#6e0000" />
      <path d="M1048 664L1076 741" stroke="#04045e" strokeWidth="5.500" />
      <path d="M1048 664L1076 741" stroke="#0a0a92" strokeWidth="3" />
      <path d="M1082.500 759l-12.500-13.500c1-5 5.500-9 9.500-8.500 3 .5 5 4 5 8z" fill="#0707a8" stroke="#03035c" />
      <rect x="1044" y="658.500" width="6" height="7" fill="#f1f1f1" stroke="#777" />

      <g strokeWidth="2">
        <path d="M315.700 906l4-20" stroke="#0dd60d" />
        <path d="M321.500 879l2 10-7-1.500z" fill="#0dd60d" />
        <path d="M316 906l18 1.500" stroke="#f20d0d" />
        <path d="M340 908.500l-9 2.500.5-5.500z" fill="#f20d0d" />
        <path d="M315.700 906l4 10" stroke="#0d0df2" />
        <path d="M322 923l-5-7.500 5-2z" fill="#0d0df2" stroke="#0d0df2" strokeWidth="1" />
      </g>
      <g fontFamily="Liberation Sans" fontSize="10">
        <text x="323" y="881" fill="#0dd60d">Y</text>
        <text x="340" y="909.500" fill="#f20d0d">X</text>
        <text x="323" y="923.500" fill="#0d0df2">Z</text>
      </g>
    </svg>
  );
}

function ViewArea() {
  return (
    <main className="flex min-w-0 grow flex-col">
      <ViewToolbar />
      <div className="relative flex min-h-0 grow flex-col border border-b-0 border-[#a7a9ab] bg-linear-to-b from-[#b9cee6] to-[#e8e9ed]">
        <Model />
        <button className="absolute -left-px bottom-0 flex h-5 items-start border border-b-0 border-[#a7a9ab] bg-white pr-[7px]">
          <span className="h-[19px] overflow-hidden">
            <Logo />
          </span>
          <span className="ml-[9px] pt-[2px] leading-4">支撑座的受力分析-三维*</span>
        </button>
      </div>
    </main>
  );
}

export default function App() {
  return (
    <div className="flex h-screen flex-col overflow-hidden bg-white font-['Noto_Sans','Noto_Sans_CJK_SC',sans-serif] text-[15px] font-light text-[#111111]">
      <Gradients />
      <TitleBar />
      <MenuTabs />
      <Ribbon />
      <div className="flex min-h-0 grow">
        <LeftPanel />
        <ViewArea />
      </div>
    </div>
  );
}
